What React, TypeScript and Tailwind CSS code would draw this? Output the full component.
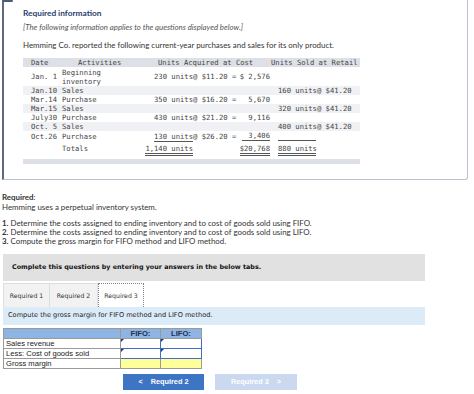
import React from 'react';

type Row = {
  date: string;
  act: React.ReactNode;
  units?: string;
  at?: string;
  amt?: string;
  sold?: string;
  shade?: boolean;
  tall?: boolean;
  ul?: boolean;
};

const rows: Row[] = [
  { date: 'Jan. 1', act: <>Beginning<br />inventory</>, units: '230 units', at: '@ $11.20 =', amt: '$ 2,576', tall: true },
  { date: 'Jan.10', act: 'Sales', sold: '160 units@ $41.20', shade: true },
  { date: 'Mar.14', act: 'Purchase', units: '350 units', at: '@ $16.20 =', amt: '5,670' },
  { date: 'Mar.15', act: 'Sales', sold: '320 units@ $41.20', shade: true },
  { date: 'July30', act: 'Purchase', units: '430 units', at: '@ $21.20 =', amt: '9,116' },
  { date: 'Oct. 5', act: 'Sales', sold: '400 units@ $41.20', shade: true },
  { date: 'Oct.26', act: 'Purchase', units: '130 units', at: '@ $26.20 =', amt: '3,406', ul: true },
];

const gridCols = 'grid grid-cols-[39px_68px_63px_41px_36px_8px_82px]';

function InventoryTable() {
  return (
    <div className="w-[337px] font-['DejaVu_Sans_Mono',monospace] text-[7.2px] leading-[9px] text-[#444] whitespace-pre">
      {/* header */}
      <div className="grid grid-cols-[55px_80px_113px_89px] h-[9px] bg-[#dde1e7]">
        <span className="pl-[8px]">Date</span>
        <span>Activities</span>
        <span>Units Acquired at Cost</span>
        <span>Units Sold at Retail</span>
      </div>

      {rows.map((r, i) => (
        <div
          key={i}
          className={`${gridCols} items-center ${r.tall ? 'h-[19px]' : r.ul ? 'h-[10px]' : 'h-[9px]'} ${r.shade ? 'bg-[#f0f1f4]' : ''}`}
        >
          <span className="pl-[8px]">{r.date}</span>
          <span>{r.act}</span>
          <span className="text-right">
            {r.units && <span className={r.ul ? 'border-b border-[#555]' : ''}>{r.units}</span>}
          </span>
          <span>{r.at}</span>
          <span className="text-right">
            {r.amt && <span className={r.ul ? 'inline-block w-[28px] border-b border-[#555]' : ''}>{r.amt}</span>}
          </span>
          <span />
          <span>
            {r.sold}
            {r.ul && <span className="block w-[38px] h-[9px] border-b border-[#555]" />}
          </span>
        </div>
      ))}

      {/* totals */}
      <div className={`${gridCols} pt-[3px] items-start`}>
        <span />
        <span>Totals</span>
        <span className="text-right">
          <span className="inline-block border-b-[3px] border-double border-[#555] leading-[8px]">1,140 units</span>
        </span>
        <span />
        <span className="text-right">
          <span className="inline-block border-b-[3px] border-double border-[#555] leading-[8px]">$20,768</span>
        </span>
        <span />
        <span>
          <span className="inline-block w-[38px] border-b-[3px] border-double border-[#555] leading-[8px]">880 units</span>
        </span>
      </div>
      <div className="mt-[3px] h-[5px] bg-[#dde1e7]" />
    </div>
  );
}

function AnswerTable() {
  const cell = 'border border-[#9a9a9a]';
  const input = 'relative bg-white border border-[#3d6fc6]';
  return (
    <table className="w-[199px] border-collapse font-['Liberation_Sans',Arial,sans-serif] text-[7.6px] text-[#222] leading-[9px]">
      <tbody>
        <tr className="h-[9px] bg-[#8eb4e3]">
          <td className={`${cell} w-[117px]`} />
          <td className={`${cell} w-[40px] text-center font-bold text-[#1d2f4f]`}>FIFO:</td>
          <td className={`${cell} text-center font-bold text-[#1d2f4f]`}>LIFO:</td>
        </tr>
        {['Sales revenue', 'Less: Cost of goods sold'].map((label) => (
          <tr key={label} className="h-[10px]">
            <td className={`${cell} pl-[2px]`}>{label}</td>
            <td className={input}>
              <span className="absolute left-0 top-0 w-0 h-0 border-t-[3px] border-r-[3px] border-t-[#1d3d7a] border-r-transparent" />
            </td>
            <td className={input}>
              <span className="absolute left-0 top-0 w-0 h-0 border-t-[3px] border-r-[3px] border-t-[#1d3d7a] border-r-transparent" />
            </td>
          </tr>
        ))}
        <tr className="h-[10px]">
          <td className={`${cell} pl-[2px]`}>Gross margin</td>
          <td className={`${cell} bg-[#ffff99]`} />
          <td className={`${cell} bg-[#ffff99]`} />
        </tr>
      </tbody>
    </table>
  );
}

export default function App() {
  return (
    <div className="w-[474px] h-[394px] bg-white overflow-hidden font-['Lato',sans-serif] text-[#333]">
      {/* Required information box */}
      <div className="relative ml-[2px] w-[466px] h-[180px] border-l-2 border-l-[#5b6a82] border-r border-b border-r-[#bcc3ce] border-b-[#bcc3ce] rounded-br-[3px] pl-[19px] pt-[8px]">
        <div className="absolute left-[-1px] top-0 w-[10px] h-[2px] bg-[#4e5d77] rounded-r-[1px]" />
        <div className="text-[8.3px] leading-[10px] font-bold text-[#1f3d6d]">Required information</div>
        <div className="mt-[4px] text-[7.8px] leading-[10px] italic text-[#555]">
          [The following information applies to the questions displayed below.]
        </div>
        <div className="mt-[8px] text-[7.9px] leading-[10px] text-[#333]">
          Hemming Co. reported the following current-year purchases and sales for its only product.
        </div>
        <div className="mt-[8px]">
          <InventoryTable />
        </div>
      </div>

      {/* Required text */}
      <div className="ml-[2px] mt-[12px] text-[7.9px] leading-[10px] text-[#333]">
        <div>
          <span className="font-bold">Required</span>:
        </div>
        <div>Hemming uses a perpetual inventory system.</div>
        <div className="mt-[7px] leading-[9px]">
          <div><span className="font-bold">1.</span> Determine the costs assigned to ending inventory and to cost of goods sold using FIFO.</div>
          <div><span className="font-bold">2.</span> Determine the costs assigned to ending inventory and to cost of goods sold using LIFO.</div>
          <div><span className="font-bold">3.</span> Compute the gross margin for FIFO method and LIFO method.</div>
        </div>
      </div>

      {/* Tabs section */}
      <div className="ml-[3px] w-[422px] mt-[8px] font-['DejaVu_Sans',Verdana,sans-serif]">
        <div className="h-[27px] bg-[#e1e1e1] flex items-center pl-[9px] text-[6.4px] font-bold text-[#111]">
          Complete this questions by entering your answers in the below tabs.
        </div>
        <div className="mt-[2px] flex h-[24px] text-[6.2px] text-[#333]">
          <div className="w-[47px] flex items-center justify-center bg-[#f2f2f2] border border-[#dedede] border-b-0">Required 1</div>
          <div className="w-[48px] flex items-center justify-center bg-[#f2f2f2] border-t border-r border-[#dedede]">Required 2</div>
          <div className="w-[46px] flex items-center justify-center bg-white border border-dotted border-[#7b8794] border-b-0">Required 3</div>
        </div>
        <div className="h-[18px] bg-[#dcebf8] flex items-center pl-[5px] text-[6.6px] text-[#222]">
          Compute the gross margin for FIFO method and LIFO method.
        </div>
        <div className="mt-[3px]">
          <AnswerTable />
        </div>
        <div className="mt-[5px] flex font-['Liberation_Sans',Arial,sans-serif] text-[7.3px] font-bold text-white">
          <div className="ml-[120px] w-[81px] h-[16px] bg-[#3e74c4] flex items-center justify-center gap-[8px]">
            <span>&lt;</span>
            <span>Required 2</span>
          </div>
          <div className="ml-[11px] w-[82px] h-[16px] bg-[#cad9ef] flex items-center justify-center gap-[8px]">
            <span>Required 3</span>
            <span>&gt;</span>
          </div>
        </div>
      </div>
    </div>
  );
}
